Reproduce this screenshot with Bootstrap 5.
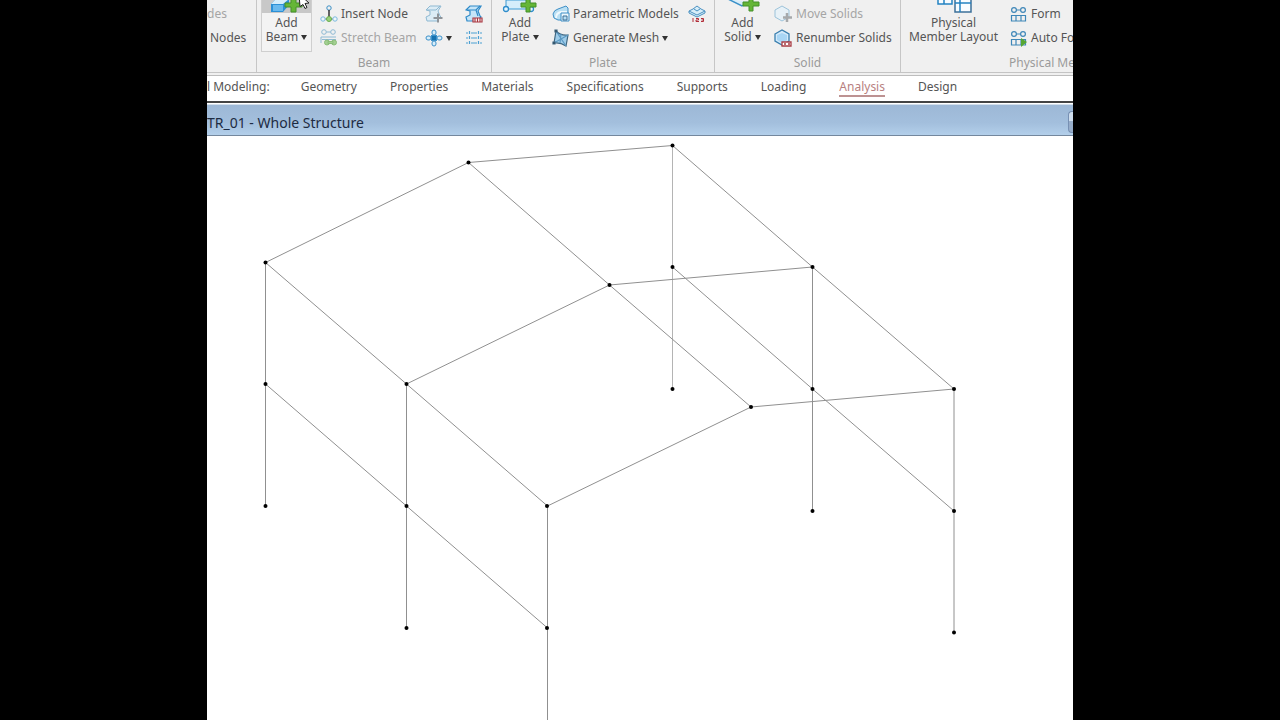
<!DOCTYPE html>
<html lang="en">
<head>
<meta charset="utf-8">
<meta name="viewport" content="width=device-width, initial-scale=1">
<title>STR_01 - Whole Structure</title>
<link href="https://cdn.jsdelivr.net/npm/bootstrap@5.3.0/dist/css/bootstrap.min.css" rel="stylesheet">
<style>
body { background: #000; color: #555; font: 12px/14px "Noto Sans", "Open Sans", sans-serif; padding: 0 207px; }
.stage { background: #fff; }
.ribbon { height: 76px; background: #f0f0f0; border-bottom: 1px solid #bdbdbd; white-space: nowrap; }
.groups { height: 73px; border-bottom: 1px solid #c4c4c4; }
.group { border-right: 1px solid #c6c6c6; flex: none; }
.group-label { color: #9b9b9b; height: 20px; }
.tools { height: 52px; }
.g-nodes { width: 50px; }
.g-beam { width: 235px; }
.g-plate { width: 223px; }
.g-solid { width: 186px; }
.btn { --bs-btn-padding-x: 0; --bs-btn-padding-y: 0; --bs-btn-border-width: 0; --bs-btn-border-radius: 0; --bs-btn-color: #555; font: inherit; }
.btn:disabled { --bs-btn-disabled-color: #a5a5a5; --bs-btn-disabled-opacity: 1; }
.stack { padding-top: 2px; }
.stack .btn { height: 24px; display: flex; align-items: center; gap: 3px; }
.big { height: 52px; display: flex; flex-direction: column; align-items: center; }
.big svg { height: 15px; margin-bottom: 1px; }
.big.active { border: 1px solid #cfcfcf; border-top: 0; background: linear-gradient(#c8c8c8 13px, #f3f3f3 13px); color: #555; }
svg { display: block; flex: none; }
.caret { display: inline-block; border: 3px solid transparent; border-top: 5px solid #333; border-bottom: 0; vertical-align: 1px; }
.tabs { height: 27px; border-bottom: 2px solid #444; gap: 33px; margin-bottom: 1px; }
.tabs span { padding-top: 4px; margin-right: -2px; }
.tabs a { color: #555; text-decoration: none; border-bottom: 2px solid transparent; padding-top: 3px; line-height: 16px; }
.tabs a.active { color: #b87f7f; border-color: #bd9292; }
.titlebar { height: 32px; background: linear-gradient(#9db8d6, #a3bfdd 60%, #b3cfea); border-top: 1px solid #d3dfeb; border-bottom: 1px solid #74879d; color: #1d2b42; font-size: 14px; line-height: 18px; }
.titlebar span { padding-top: 6px; }
.winbtn { width: 5px; height: 22px; border: 1px solid #7790b3; border-right: 0; border-radius: 4px 0 0 4px; background: linear-gradient(#cfdeee 45%, #97adca 45%); padding: 0; margin-top: 4px; }
.beams { stroke: #909090; stroke-width: 1; fill: none; }
</style>
</head>
<body>
<svg width="0" height="0" class="position-absolute" aria-hidden="true">
  <defs>
    <g id="formbar" fill="none" stroke="#3f87b8" stroke-width="1.2"><circle cx="4" cy="4" r="2.4"/><circle cx="13" cy="4" r="2.4"/><path d="M6.400 4h4.200M1.500 9.500h14v5.500h-14zM6 9.500v5.500M11 9.500v5.500"/></g>
  </defs>
</svg>
<main class="stage overflow-hidden">
  <header class="ribbon overflow-hidden">
    <div class="groups d-flex overflow-hidden">
      <section class="group g-nodes">
        <div class="stack">
          <button class="btn" disabled>des</button>
          <button class="btn" style="padding-left:3px">Nodes</button>
        </div>
      </section>

      <section class="group g-beam">
        <div class="tools d-flex">
          <button class="btn big active ms-1" style="width:51px">
            <svg width="50" viewBox="0 0 50 15"><path d="M9 4l5-5h13v6l-6 7H9z" fill="#2c90d6"/><path d="M11 5h10v6H11z" fill="#69b9ee"/><path d="M9 4l5-5h13l-6 5z" fill="#d6edfb"/><path d="M29 -3h5v6h6v4h-6v5h-5V7h-6V3h6z" fill="#65b637" stroke="#44902a"/><path d="M37-6l10 9-4 .5 2 4-2 1-2-4-3 2z" fill="#fff" stroke="#222"/></svg>
            <span>Add<br>Beam <i class="caret"></i></span>
          </button>
          <div class="stack ms-2">
            <button class="btn"><svg width="18" height="18" viewBox="0 0 18 18" fill="none"><circle cx="9" cy="3" r="2.200" stroke="#3b8fc5"/><path d="M9 5v7" stroke="#333" stroke-width="1.500"/><path d="M4 14h10" stroke="#777"/><circle cx="3" cy="14" r="2.200" fill="#eef7fb" stroke="#7bb9dd"/><circle cx="15" cy="14" r="2.200" fill="#eef7fb" stroke="#7bb9dd"/><circle cx="9" cy="14" r="2.500" fill="#9ad27c" stroke="#69ab4d"/></svg>Insert Node</button>
            <button class="btn" disabled><svg width="18" height="18" viewBox="0 0 18 18" fill="none" stroke="#8fbad4"><circle cx="4" cy="3" r="2.300"/><circle cx="13" cy="3" r="2.300"/><path d="M6.300 3h4.400M1 14V8h15M2 10.500h14" /><g fill="#a3cf92" stroke="#8abd79"><circle cx="7" cy="13.500" r="2.500"/><circle cx="14" cy="13.500" r="2.500"/><path d="M8 12.500h5v2H8z"/></g></svg>Stretch Beam</button>
          </div>
          <div class="stack ms-2">
            <button class="btn" disabled aria-label="Move beam"><svg width="18" height="18" viewBox="0 0 18 18" fill="#dcecf5" stroke="#8fb9d2"><path d="M1 5l4-4h11l-3 5 2 5 1 1-4 4H2l-1-4 4-2V6z"/><path d="M2 5h9l4-4" fill="none"/><path d="M13 8.500v9M8.500 13h9" stroke="#8f9499" stroke-width="2"/></svg></button>
            <button class="btn" aria-label="Beam orientation"><svg width="18" height="18" viewBox="0 0 18 18" fill="#d8edf9" stroke="#3c91c9"><rect x="7" y="1" width="4" height="5" rx="2"/><rect x="7" y="12" width="4" height="5" rx="2"/><rect x="1" y="7" width="5" height="4" rx="2"/><rect x="12" y="7" width="5" height="4" rx="2"/><rect x="6.500" y="6.500" width="5" height="5" fill="#1672b0"/></svg><i class="caret"></i></button>
          </div>
          <div class="stack ms-auto me-2">
            <button class="btn" aria-label="Renumber beams"><svg width="18" height="18" viewBox="0 0 18 18" fill="#c5e5f8" stroke="#2f8ac8" stroke-width="1.200"><path d="M1 5l4-4h11l-3 5 2 5 1 1-4 4H2l-1-4 4-2V6z"/><path d="M2 5h9l4-4M11 5l2 6" fill="none"/><path d="M8 13h9v4H8z" fill="#fff" stroke="#a83640"/><path d="M10 13v4M12.500 13v4M15 13v4" stroke="#a83640"/></svg></button>
            <button class="btn" aria-label="Beam grid"><svg width="18" height="18" viewBox="0 0 18 18" fill="none" stroke="#4b9fd2" stroke-width="1.200"><path d="M1 4h2M6 4h6M15 4h2M1 9h2M6 9h6M15 9h2M1 14h2M6 14h6M15 14h2"/><path d="M4.500 2v14M13.500 2v14" stroke-dasharray="3 2"/></svg></button>
          </div>
        </div>
        <div class="group-label text-center pt-1">Beam</div>
      </section>

      <section class="group g-plate">
        <div class="tools d-flex">
          <button class="btn big" style="width:56px">
            <svg width="50" viewBox="0 0 50 15"><path d="M11 9V0h24v9z" fill="#d5edfb" stroke="#3d9ad4"/><g fill="#e7f6ff" stroke="#2d8ccb" stroke-width="1.300"><circle cx="11" cy="9" r="2.500"/><circle cx="36" cy="9" r="2.500"/></g><path d="M31-2h4v5h6v4h-6v5h-4V7h-5V3h5z" fill="#65b637" stroke="#44902a"/></svg>
            <span>Add<br>Plate <i class="caret"></i></span>
          </button>
          <div class="stack ms-1">
            <button class="btn"><svg width="18" height="18" viewBox="0 0 18 18" fill="#b9dff3" stroke="#3f8fc6"><path d="M1 9q1-4 5-5l8-3 2 2v12H6l-4-2z"/><path d="M4 13q0-5 5-6h6" fill="none" stroke="#eef8fd" stroke-width="2"/><path d="M9 8h8v8H9z" fill="#eef7fc"/><path d="M11 11h4v4h-4z" stroke="#3d6f96"/></svg>Parametric Models</button>
            <button class="btn"><svg width="18" height="18" viewBox="0 0 18 18" fill="#9fcdea" stroke="#3f6782" stroke-width="1.200"><path d="M4 2q5 5 12 4l-2 11q-6-4-12-3z"/><path d="M4 2l10 15M2 14L16 6M9 5L8 14" fill="none" stroke="#5a98c2"/><path d="M3 1h2v2H3zM1 13h2v2H1z" fill="#222"/></svg>Generate Mesh<i class="caret"></i></button>
          </div>
          <div class="stack ms-auto me-2">
            <button class="btn" aria-label="Renumber plates"><svg width="18" height="20" viewBox="0 0 18 20" fill="#d7edf8" stroke="#4a91c1"><path d="M1 7l4-2 4-3 4 3 4 2v2l-8 4-8-4z"/><path d="M1 7l8 4 8-4M6 5l3 2 3-2" fill="none"/><path d="M5 14v4M8 14.500h2.500V16H8v1.500h3M13 14.500h2.500v3H13M13.500 16h2" fill="none" stroke="#b22f3a"/></svg></button>
          </div>
        </div>
        <div class="group-label text-center pt-1">Plate</div>
      </section>

      <section class="group g-solid">
        <div class="tools d-flex">
          <button class="btn big" style="width:55px">
            <svg width="50" viewBox="0 0 50 15"><path d="M10-1l14 7 8-4" fill="#d8edf9" stroke="#3b91c9" stroke-width="1.500"/><path d="M31-3h4v5h6v4h-6v5h-4V6h-6V2h6z" fill="#65b637" stroke="#44902a"/></svg>
            <span>Add<br>Solid <i class="caret"></i></span>
          </button>
          <div class="stack ms-1">
            <button class="btn gap-1" disabled><svg width="18" height="18" viewBox="0 0 18 18" fill="#e7f1f7" stroke="#9cc3da"><path d="M1 5l7-4 7 4v7l-7 4-7-4z"/><path d="M13 8v9M9 12.500h9" stroke="#a6a9ab" stroke-width="2.500"/></svg>Move Solids</button>
            <button class="btn gap-1"><svg width="18" height="18" viewBox="0 0 18 18" fill="#d4eafa" stroke="#397faf" stroke-width="1.300"><path d="M1 5l7-4 7 4v7l-7 4-7-4z"/><path d="M3 6l5-2 5 2v5l-5 3-5-3z" fill="#a9d6f5" stroke="none"/><path d="M8 13h9v4H8z" fill="#fff" stroke="#a93e46"/><path d="M10 15h2M14 15h2" stroke="#a93e46"/></svg>Renumber Solids</button>
          </div>
        </div>
        <div class="group-label text-center pt-1">Solid</div>
      </section>

      <section class="group">
        <div class="tools d-flex">
          <button class="btn big" style="width:105px">
            <svg width="50" viewBox="0 0 50 15"><g fill="#f8fcff" stroke="#2382c2" stroke-width="1.500"><path d="M9-4h14v8H9zM15-4v8"/><path d="M26-1h16v13H26z" stroke="#3c7099"/><path d="M26 3h16M31-1v13"/></g></svg>
            <span>Physical<br>Member Layout</span>
          </button>
          <div class="stack ms-1">
            <button class="btn gap-1"><svg width="17" height="17" viewBox="0 0 17 17"><use href="#formbar"/></svg>Form</button>
            <button class="btn gap-1"><svg width="17" height="17" viewBox="0 0 17 17"><use href="#formbar"/><path d="M11 8l6 4-6 5z" fill="#56a632"/></svg>Auto Form</button>
          </div>
        </div>
        <div class="group-label pt-1" style="padding-left:108px">Physical Member</div>
      </section>
    </div>
  </header>

  <nav class="tabs d-flex align-items-start text-nowrap overflow-hidden">
    <span>l Modeling:</span>
    <a href="#">Geometry</a>
    <a href="#">Properties</a>
    <a href="#">Materials</a>
    <a href="#">Specifications</a>
    <a href="#">Supports</a>
    <a href="#">Loading</a>
    <a href="#" class="active">Analysis</a>
    <a href="#">Design</a>
  </nav>

  <div class="titlebar d-flex justify-content-between align-items-center">
    <span>TR_01 - Whole Structure</span>
    <button class="winbtn" aria-label="Minimize"></button>
  </div>

  <svg class="w-100" viewBox="207 136 866 584" role="img" aria-label="Frame model">
    <g class="beams">
      <path d="M265.500 506V262.500L468.500 162.500L672.500 145.500"/>
      <path d="M672.500 145.500V389" stroke="#b4b4b4"/>
      <path d="M406.500 628V384L609.500 285L812.500 267V511"/>
      <path d="M547.500 720V506L751 407L954 389V632"/>
      <path d="M265.500 262.500L406.500 384L547.500 506M468.500 162.500L609.500 285L751 407M672.500 145.500L812.500 267L954 389"/>
      <path d="M265.500 384L406.500 506L547.500 628M672.500 267L812.500 389L954 511"/>
    </g>
    <g fill="#000">
      <circle cx="265.500" cy="262.500" r="2"/><circle cx="265.500" cy="384" r="2"/><circle cx="265.500" cy="506" r="2"/>
      <circle cx="468.500" cy="162.500" r="2"/><circle cx="672.500" cy="145.500" r="2"/><circle cx="672.500" cy="267" r="2"/><circle cx="672.500" cy="389" r="2"/>
      <circle cx="406.500" cy="384" r="2"/><circle cx="406.500" cy="506" r="2"/><circle cx="406.500" cy="628" r="2"/>
      <circle cx="609.500" cy="285" r="2"/><circle cx="812.500" cy="267" r="2"/><circle cx="812.500" cy="389" r="2"/><circle cx="812.500" cy="511" r="2"/>
      <circle cx="547" cy="506" r="2"/><circle cx="547" cy="628" r="2"/><circle cx="751" cy="407" r="2"/>
      <circle cx="954" cy="389" r="2"/><circle cx="954" cy="511" r="2"/><circle cx="954" cy="632.500" r="2"/>
    </g>
  </svg>
</main>
<script src="https://cdn.jsdelivr.net/npm/bootstrap@5.3.0/dist/js/bootstrap.bundle.min.js"></script>
</body>
</html>
